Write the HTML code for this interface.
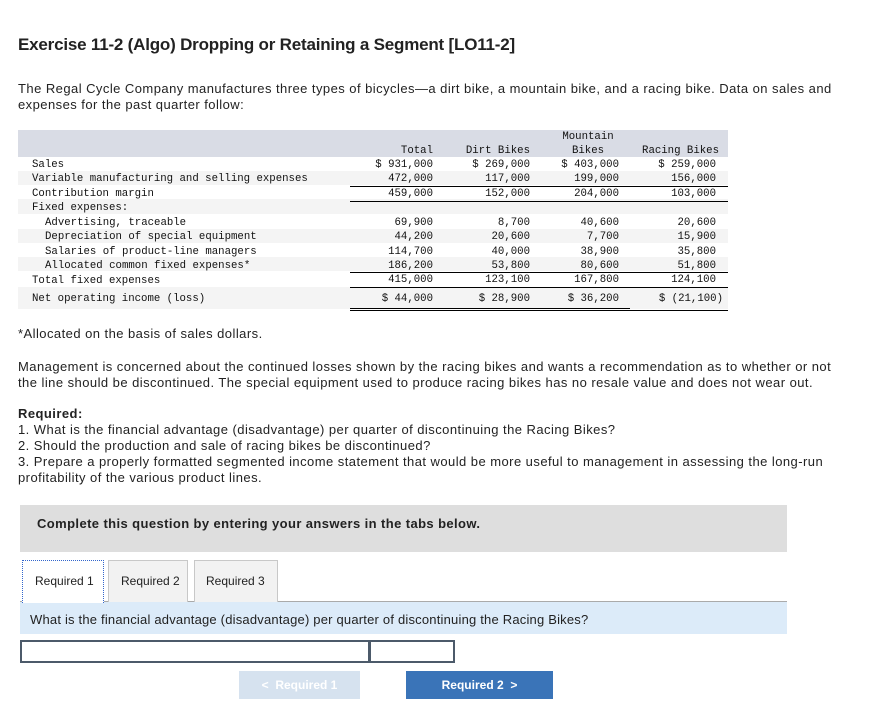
<!DOCTYPE html>
<html><head><style>
body{margin:0;width:884px;height:720px;background:#fff;position:relative;font-family:"Liberation Sans",sans-serif;color:#222;overflow:hidden}
.a{position:absolute;white-space:nowrap}
.t{font-size:13px;line-height:16px;letter-spacing:.45px}
.m{font-family:"Liberation Mono",monospace;font-size:10.7px;line-height:14.3px;color:#111}
.r{text-align:right}
.bg{position:absolute;left:18px;width:710px;background:#f4f4f4}
.ln{position:absolute;height:1px;background:#000}
</style></head><body>
<div class="a" style="left:18px;top:34px;font-size:17px;font-weight:bold;line-height:22px;letter-spacing:-.2px">Exercise 11-2 (Algo) Dropping or Retaining a Segment [LO11-2]</div>
<div class="a t" style="left:18px;top:81px">The Regal Cycle Company manufactures three types of bicycles—a dirt bike, a mountain bike, and a racing bike. Data on sales and<br>expenses for the past quarter follow:</div>

<div style="position:absolute;left:18px;top:130px;width:710px;height:27px;background:#d9dce5"></div>
<div class="bg" style="top:171px;height:14px"></div>
<div class="bg" style="top:199px;height:15px"></div>
<div class="bg" style="top:229px;height:14px"></div>
<div class="bg" style="top:257px;height:14px"></div>
<div class="bg" style="top:287px;height:22px"></div>

<div class="a m" style="left:32px;top:158px">Sales<br>Variable manufacturing and selling expenses<br>Contribution margin<br>Fixed expenses:</div>
<div class="a m" style="left:45px;top:216px">Advertising, traceable<br>Depreciation of special equipment<br>Salaries of product-line managers<br>Allocated common fixed expenses*</div>
<div class="a m" style="left:32px;top:274px">Total fixed expenses</div>
<div class="a m" style="left:32px;top:292px">Net operating income (loss)</div>

<div class="a m r" style="right:451px;top:144px">Total</div>
<div class="a m r" style="right:354px;top:144px">Dirt Bikes</div>
<div class="a m" style="left:560px;top:130px;text-align:center;width:56px">Mountain<br>Bikes</div>
<div class="a m r" style="right:165px;top:144px">Racing Bikes</div>

<div class="a m r" style="right:451px;top:158px">$ 931,000<br>472,000<br>459,000</div>
<div class="a m r" style="right:354px;top:158px">$ 269,000<br>117,000<br>152,000</div>
<div class="a m r" style="right:265px;top:158px">$ 403,000<br>199,000<br>204,000</div>
<div class="a m r" style="right:168px;top:158px">$ 259,000<br>156,000<br>103,000</div>

<div class="a m r" style="right:451px;top:216px">69,900<br>44,200<br>114,700<br>186,200<br>415,000</div>
<div class="a m r" style="right:354px;top:216px">8,700<br>20,600<br>40,000<br>53,800<br>123,100</div>
<div class="a m r" style="right:265px;top:216px">40,600<br>7,700<br>38,900<br>80,600<br>167,800</div>
<div class="a m r" style="right:168px;top:216px">20,600<br>15,900<br>35,800<br>51,800<br>124,100</div>

<div class="a m r" style="right:451px;top:292px">$ 44,000</div>
<div class="a m r" style="right:354px;top:292px">$ 28,900</div>
<div class="a m r" style="right:265px;top:292px">$ 36,200</div>
<div class="a m r" style="right:161px;top:292px">$ (21,100)</div>

<div class="ln" style="left:350px;width:378px;top:186px"></div>
<div class="ln" style="left:350px;width:378px;top:201px"></div>
<div class="ln" style="left:350px;width:378px;top:272px"></div>
<div class="ln" style="left:350px;width:378px;top:287px"></div>
<div class="ln" style="left:350px;width:280px;top:308px"></div>
<div class="ln" style="left:350px;width:378px;top:310px"></div>

<div class="a t" style="left:18px;top:326px">*Allocated on the basis of sales dollars.</div>
<div class="a t" style="left:18px;top:359px">Management is concerned about the continued losses shown by the racing bikes and wants a recommendation as to whether or not<br>the line should be discontinued. The special equipment used to produce racing bikes has no resale value and does not wear out.</div>
<div class="a t" style="left:18px;top:406px"><b>Required:</b><br>1. What is the financial advantage (disadvantage) per quarter of discontinuing the Racing Bikes?<br>2. Should the production and sale of racing bikes be discontinued?<br>3. Prepare a properly formatted segmented income statement that would be more useful to management in assessing the long-run<br>profitability of the various product lines.</div>

<div style="position:absolute;left:20px;top:505px;width:767px;height:47px;background:#dedede"></div>
<div class="a" style="left:37px;top:516px;font-size:13px;font-weight:bold;line-height:16px;letter-spacing:.4px">Complete this question by entering your answers in the tabs below.</div>

<div style="position:absolute;left:20px;top:602px;width:767px;height:32px;background:#dcebf9"></div>
<div style="position:absolute;left:20px;top:601px;width:767px;height:1px;background:#aaa"></div>
<div style="position:absolute;left:22px;top:560px;width:80px;height:42px;background:#fff;border:1px dotted #36c;border-bottom:none"></div>
<div style="position:absolute;left:108px;top:560px;width:78px;height:41px;background:#f2f2f2;border:1px solid #c8c8c8;border-bottom:none"></div>
<div style="position:absolute;left:194px;top:560px;width:82px;height:41px;background:#f2f2f2;border:1px solid #c8c8c8;border-bottom:none"></div>
<div class="a" style="left:35px;top:574px;font-size:12px">Required 1</div>
<div class="a" style="left:121px;top:574px;font-size:12px">Required 2</div>
<div class="a" style="left:206px;top:574px;font-size:12px">Required 3</div>
<div class="a t" style="left:30px;top:612px;letter-spacing:.2px">What is the financial advantage (disadvantage) per quarter of discontinuing the Racing Bikes?</div>

<div style="position:absolute;left:20px;top:640px;width:346px;height:19px;border:2px solid #4c5a6a;background:#fff"></div>
<div style="position:absolute;left:369px;top:640px;width:82px;height:19px;border:2px solid #4c5a6a;background:#fff"></div>

<div class="a" style="left:239px;top:671px;width:121px;height:28px;background:#d6e2ef;color:#fff;font-size:12px;font-weight:bold;line-height:28px;text-align:center">&lt;&nbsp; Required 1</div>
<div class="a" style="left:406px;top:671px;width:147px;height:28px;background:#3a74b8;color:#fff;font-size:12px;font-weight:bold;line-height:28px;text-align:center">Required 2 &nbsp;&gt;</div>
</body></html>
